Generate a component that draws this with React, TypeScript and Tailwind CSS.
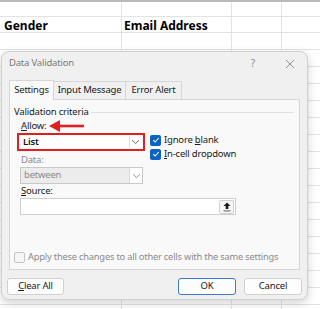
import React from "react";

const ui = { fontFamily: '"Noto Sans", "Open Sans", sans-serif' };

function Check({ on }: { on: boolean }) {
  return on ? (
    <span className="flex h-[11px] w-[11px] shrink-0 items-center justify-center rounded-[2px] bg-[#0b63c4]">
      <svg width="8" height="8" viewBox="0 0 8 8">
        <path d="M1.3 4.2 3.1 6 6.8 2" fill="none" stroke="white" strokeWidth="1.1" />
      </svg>
    </span>
  ) : (
    <span className="h-[11px] w-[11px] shrink-0 rounded-[2px] border border-[#c4c4c4] bg-[#f6f6f6]" />
  );
}

function Chevron({ color = "#555" }: { color?: string }) {
  return (
    <svg width="9" height="6" viewBox="0 0 9 6">
      <path d="M1 1.2 4.5 4.6 8 1.2" fill="none" stroke={color} strokeWidth="0.9" />
    </svg>
  );
}

function SheetRow({ a = "", b = "", h = "h-[17px]" }: { a?: string; b?: string; h?: string }) {
  return (
    <div className={`grid ${h} grid-cols-[122px_110px_50px_38px] border-b border-[#e3e3e3]`}>
      <div className="border-r border-[#e3e3e3] pl-[4px] text-[12px] leading-[17px] font-bold text-black">
        {a}
      </div>
      <div className="border-r border-[#e3e3e3] pl-[2px] text-[12px] leading-[17px] font-bold text-black">
        {b}
      </div>
      <div className="border-r border-[#e3e3e3]" />
      <div />
    </div>
  );
}

export default function App() {
  const rest = Array.from({ length: 17 });
  return (
    <div className="relative h-[309px] w-[320px] overflow-hidden bg-white" style={ui}>
      {/* sheet */}
      <div className="border-t-2 border-[#b9b9b9]">
        <SheetRow h="h-[15px]" />
        <SheetRow a="Gender" b="Email Address" h="h-[16px]" />
        {rest.map((_, i) => (
          <SheetRow key={i} />
        ))}
      </div>

      {/* dialog */}
      <div className="absolute left-[1px] top-[51px] flex h-[249px] w-[307px] flex-col rounded-[8px] border border-[#d0d0d0] bg-[#f0f0f0] text-[9.5px] tracking-[-0.2px] shadow-[0_3px_10px_rgba(0,0,0,0.18)]">
        <div className="flex h-[22px] items-center justify-between pl-[7px] pr-[12px] pt-[1px] text-[#7a7a7a]">
          <span>Data Validation</span>
          <div className="flex items-center gap-[30px]">
            <span className="text-[10px] text-[#8a8a8a]">?</span>
            <svg width="10" height="10" viewBox="0 0 10 10">
              <path d="M1 1 9 9M9 1 1 9" stroke="#8a8a8a" strokeWidth="0.9" />
            </svg>
          </div>
        </div>

        {/* tabs */}
        <div className="mt-[6px] flex items-end pl-[7px] text-[#1a1a1a]">
          <div className="relative z-10 -mb-px flex h-[20px] w-[45px] items-center justify-center border border-b-0 border-[#d6d6d6] bg-[#f9f9f9]">
            Settings
          </div>
          <div className="flex h-[18px] w-[72px] items-center justify-center border border-b-0 border-l-0 border-[#d6d6d6] bg-[#f0f0f0]">
            Input Message
          </div>
          <div className="flex h-[18px] w-[56px] items-center justify-center border border-b-0 border-l-0 border-[#d6d6d6] bg-[#f0f0f0]">
            Error Alert
          </div>
        </div>

        {/* panel */}
        <div className="mx-[7px] flex h-[171px] flex-col border border-[#d6d6d6] bg-[#f9f9f9] px-[4px] text-[#1a1a1a]">
          <div className="mt-[5px] flex h-[15px] items-center gap-[2px]">
            <span>Validation criteria</span>
            <div className="mr-[2px] h-px flex-1 bg-[#e0e0e0]" />
          </div>

          <div className="relative flex h-[13px] items-center pl-[7px]">
            <span>
              <span className="underline">A</span>llow:
            </span>
            <svg className="absolute left-[35px] top-[-1px]" width="35" height="14" viewBox="0 0 35 14">
              <path d="M9 7H35" stroke="#e02020" strokeWidth="2.6" />
              <path d="M0 7 11 1V13Z" fill="#e02020" />
            </svg>
          </div>

          <div className="flex">
            <div className="flex flex-col">
              <div className="ml-[3px] w-[128px] border-2 border-[#e0201f] p-px">
                <div className="flex h-[12px] items-center justify-between bg-white pl-[3px] pr-[1px]">
                  <span className="font-semibold text-[#111]">List</span>
                  <span className="flex h-[12px] w-[12px] items-center justify-center border-l border-[#dcdcdc]">
                    <Chevron />
                  </span>
                </div>
              </div>
              <div className="mt-[2px] h-[14px] pl-[7px] leading-[14px] text-[#8a8a8a]">Data:</div>
              <div className="ml-[6px] flex h-[17px] w-[123px] items-center justify-between border border-[#c8c8c8] bg-[#ececec] pl-[3px] text-[#8a8a8a]">
                <span>between</span>
                <span className="flex h-[15px] w-[13px] items-center justify-center border-l border-[#d8d8d8] bg-white">
                  <Chevron color="#888" />
                </span>
              </div>
            </div>
            <div className="ml-[5px] flex flex-col">
              <div className="flex h-[14px] items-center gap-[3px]">
                <Check on />
                <span>
                  Ignore <span className="underline">b</span>lank
                </span>
              </div>
              <div className="flex h-[14px] items-center gap-[3px]">
                <Check on />
                <span>
                  <span className="underline">I</span>n-cell dropdown
                </span>
              </div>
            </div>
          </div>

          <div className="h-[14px] pl-[7px] leading-[14px]">
            <span className="underline">S</span>ource:
          </div>
          <div className="ml-[6px] flex h-[17px] w-[216px] items-center justify-end border border-[#cfcfcf] bg-white pr-px">
            <span className="flex h-[14px] w-[15px] items-center justify-center rounded-[2px] border border-[#d0d0d0] bg-[#f6f6f6]">
              <svg width="8" height="10" viewBox="0 0 8 10">
                <path d="M4 0.5 7.5 4H5.3V7H2.7V4H0.5Z" fill="#1a1a1a" />
                <path d="M0.5 8.3H7.5V9.5H0.5Z" fill="#777" />
              </svg>
            </span>
          </div>

          <div className="mt-auto mb-[5px] flex items-center gap-[3px] text-[#8a8a8a]">
            <Check on={false} />
            <span className="whitespace-nowrap text-[9.3px]">
              Apply these changes to all other cells with the same settings
            </span>
          </div>
        </div>

        {/* buttons */}
        <div className="mt-[8px] flex items-center px-[5px] text-[#1a1a1a]">
          <button className="flex h-[17px] w-[57px] items-center justify-center rounded-[3px] border border-[#d0d0d0] bg-[#fdfdfd]">
            <span>
              <span className="underline">C</span>lear All
            </span>
          </button>
          <div className="flex-1" />
          <button className="flex h-[17px] w-[58px] items-center justify-center rounded-[3px] border border-[#3c79c9] bg-[#fdfdfd]">
            OK
          </button>
          <button className="ml-[8px] flex h-[17px] w-[58px] items-center justify-center rounded-[3px] border border-[#d0d0d0] bg-[#fdfdfd]">
            Cancel
          </button>
        </div>
      </div>
    </div>
  );
}
